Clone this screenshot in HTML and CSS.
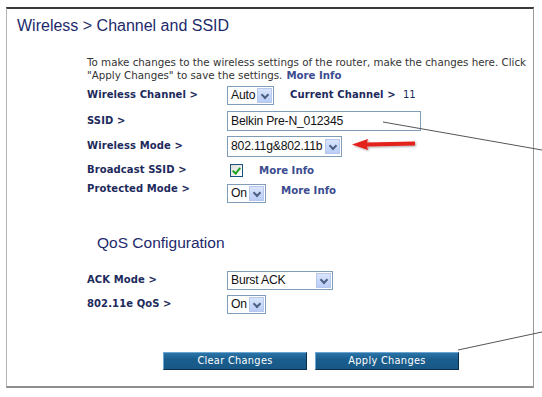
FILE: index.html
```html
<!DOCTYPE html>
<html>
<head>
<meta charset="utf-8">
<link rel="stylesheet" href="styles.css">
</head>
<body>
<div class="panel">
  <h1 class="title">Wireless &gt; Channel and SSID</h1>
  <div class="desc">
    <div class="line">To make changes to the wireless settings of the router, make the changes here. Click</div>
    <div class="line l2"><span>"Apply Changes" to save the settings.</span><a class="more">More Info</a></div>
  </div>
  <div class="form">
    <div class="row r1">
      <span class="label">Wireless Channel &gt;</span>
      <div class="ctl">
        <span class="select w-auto"><span class="val">Auto</span><span class="arrow"></span></span>
        <span class="label cur">Current Channel &gt;&nbsp; <span class="num">11</span></span>
      </div>
    </div>
    <div class="row r2">
      <span class="label">SSID &gt;</span>
      <div class="ctl"><span class="input">Belkin Pre-N_012345</span></div>
    </div>
    <div class="row r3">
      <span class="label">Wireless Mode &gt;</span>
      <div class="ctl"><span class="select w-mode"><span class="val">802.11g&amp;802.11b</span><span class="arrow"></span></span></div>
    </div>
    <div class="row r4">
      <span class="label">Broadcast SSID &gt;</span>
      <div class="ctl"><span class="check"></span><a class="more m1">More Info</a></div>
    </div>
    <div class="row r5">
      <span class="label">Protected Mode &gt;</span>
      <div class="ctl"><span class="select w-on"><span class="val">On</span><span class="arrow"></span></span><a class="more m2">More Info</a></div>
    </div>
  </div>
  <h2 class="qos">QoS Configuration</h2>
  <div class="form">
    <div class="row r6">
      <span class="label">ACK Mode &gt;</span>
      <div class="ctl"><span class="select w-ack"><span class="val">Burst ACK</span><span class="arrow"></span></span></div>
    </div>
    <div class="row r7">
      <span class="label">802.11e QoS &gt;</span>
      <div class="ctl"><span class="select w-on"><span class="val">On</span><span class="arrow"></span></span></div>
    </div>
  </div>
  <div class="buttons">
    <button class="btn clear">Clear Changes</button>
    <button class="btn apply">Apply Changes</button>
  </div>
</div>
<svg class="annot" width="542" height="397" viewBox="0 0 542 397">
  <defs>
    <filter id="sh" x="-20%" y="-50%" width="140%" height="200%">
      <feGaussianBlur in="SourceAlpha" stdDeviation="1"/>
      <feOffset dx="1" dy="1"/>
      <feComponentTransfer><feFuncA type="linear" slope="0.35"/></feComponentTransfer>
      <feMerge><feMergeNode/><feMergeNode in="SourceGraphic"/></feMerge>
    </filter>
  </defs>
  <line x1="383" y1="122" x2="542" y2="150" stroke="#555" stroke-width="1"/>
  <line x1="458" y1="350" x2="542" y2="332" stroke="#555" stroke-width="1"/>
  <g filter="url(#sh)">
    <path d="M352 144.5 L368 139 L367 142.6 L415 141.6 L415 145.6 L367 146.4 L368 150 Z" fill="#e3221b"/>
  </g>
</svg>
</body>
</html>
```
FILE: styles.css
```css
html, body {
  margin: 0;
  padding: 0;
  background: #fff;
}
body {
  width: 542px;
  height: 397px;
  overflow: hidden;
  position: relative;
  font-family: "DejaVu Sans", Verdana, sans-serif;
}
.panel {
  margin: 7px 0 0 6px;
  width: 528px;
  height: 381px;
  box-sizing: border-box;
  border-top: 2px solid #3a3a3a;
  border-left: 1px solid #b4b4b4;
  border-right: 1px solid #9a9a9a;
  border-bottom: 2px solid #8e8e8e;
}
.title {
  margin: 0;
  padding: 8px 0 0 10px;
  font-family: "Liberation Sans", Arial, sans-serif;
  font-weight: normal;
  font-size: 16px;
  line-height: 18px;
  color: #1d2a6b;
}
.desc {
  margin: 21px 0 0 80px;
  width: 448px;
  font-size: 10.3px;
  line-height: 13px;
  color: #333;
  white-space: nowrap;
}
.l2 {
  display: flex;
  align-items: baseline;
  gap: 4px;
}
.more {
  font-weight: bold;
  color: #3b4b8f;
  font-size: 10.2px;
}
.form {
  margin-left: 80px;
  display: flex;
  flex-direction: column;
}
.row {
  display: flex;
  align-items: center;
  height: 24px;
}
.label {
  width: 140px;
  flex: none;
  font-weight: bold;
  font-size: 10px;
  line-height: 12px;
  color: #1d2a5c;
  letter-spacing: 0.1px;
}
.ctl {
  display: flex;
  align-items: center;
}
.r1 { margin-top: 1px; height: 24px; }
.r2 { height: 28px; }
.r3 { height: 22px; }
.r4 { height: 26px; }
.r5 { height: 20px; }
.r5 .label { align-self: flex-start; margin-top: 0; }
.cur { width: auto; margin-left: 16px; }
.num { font-weight: normal; }
.select {
  display: inline-flex;
  align-items: center;
  justify-content: space-between;
  box-sizing: border-box;
  height: 19px;
  border: 1px solid #7f9db9;
  background: #fff;
  padding: 1px;
  font-family: "Liberation Sans", Arial, sans-serif;
  font-size: 12.2px;
  color: #111;
}
.select .val { padding-left: 2px; letter-spacing: -0.2px; }
.arrow {
  width: 15px;
  height: 15px;
  background: linear-gradient(#d9e5fd, #b9cdf6);
  border: 1px solid #b8c8ec;
  box-sizing: border-box;
  position: relative;
}
.arrow::after {
  content: "";
  position: absolute;
  left: 4px;
  top: 3px;
  width: 4px;
  height: 4px;
  border-right: 2px solid #4d6185;
  border-bottom: 2px solid #4d6185;
  transform: rotate(45deg);
}
.w-auto { width: 47px; }
.w-mode { width: 115px; height: 21px; }
.w-on { width: 39px; }
.w-ack { width: 106px; }
.input {
  display: inline-block;
  box-sizing: border-box;
  width: 194px;
  height: 20px;
  border: 1px solid #7f9db9;
  padding: 1px 3px;
  font-family: "Liberation Sans", Arial, sans-serif;
  font-size: 12.2px;
  line-height: 16px;
  color: #111;
  letter-spacing: -0.2px;
}
.check {
  width: 11px;
  height: 11px;
  border: 1px solid #1c5180;
  margin-left: 3px;
  background: linear-gradient(135deg, #dcdcd6, #fff);
  position: relative;
}
.check::after {
  content: "";
  position: absolute;
  left: 3px;
  top: 1px;
  width: 3px;
  height: 6px;
  border-right: 2px solid #21a121;
  border-bottom: 2px solid #21a121;
  transform: rotate(40deg);
}
.m1 { margin-left: 16px; }
.m2 { margin-left: 15px; margin-top: -6px; }
.qos {
  margin: 31px 0 0 90px;
  font-family: "Liberation Sans", Arial, sans-serif;
  font-weight: normal;
  font-size: 15.5px;
  line-height: 18px;
  color: #1d2a6b;
}
.r6 { margin-top: 16px; }
.r7 { height: 24px; }
.buttons {
  display: flex;
  gap: 8px;
  margin: 36px 0 0 156px;
}
.btn {
  box-sizing: border-box;
  width: 144px;
  height: 18px;
  padding: 0;
  border: 1px solid;
  border-color: #6aa6cf #0d2e48 #0d2e48 #6aa6cf;
  background: linear-gradient(#2b74a8, #1a5e8f 40%, #185886);
  color: #fff;
  font-family: "DejaVu Sans", Verdana, sans-serif;
  font-size: 9.8px;
  line-height: 16px;
  letter-spacing: 0.3px;
}
.annot {
  position: absolute;
  left: 0;
  top: 0;
  pointer-events: none;
}
```
